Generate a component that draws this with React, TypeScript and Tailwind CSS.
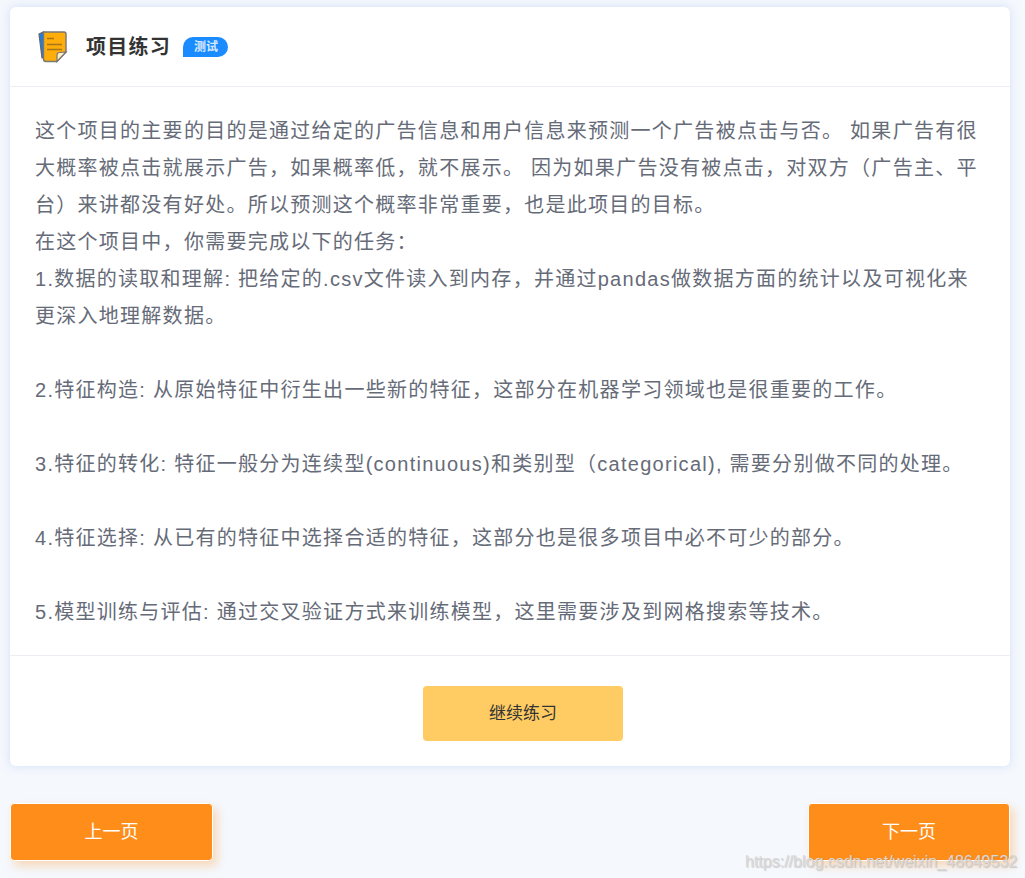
const paragraphs = [
  "这个项目的主要的目的是通过给定的广告信息和用户信息来预测一个广告被点击与否。 如果广告有很大概率被点击就展示广告，如果概率低，就不展示。 因为如果广告没有被点击，对双方（广告主、平台）来讲都没有好处。所以预测这个概率非常重要，也是此项目的目标。",
  "在这个项目中，你需要完成以下的任务：",
  "1.数据的读取和理解: 把给定的.csv文件读入到内存，并通过pandas做数据方面的统计以及可视化来更深入地理解数据。",
  "",
  "2.特征构造: 从原始特征中衍生出一些新的特征，这部分在机器学习领域也是很重要的工作。",
  "",
  "3.特征的转化: 特征一般分为连续型(continuous)和类别型（categorical), 需要分别做不同的处理。",
  "",
  "4.特征选择: 从已有的特征中选择合适的特征，这部分也是很多项目中必不可少的部分。",
  "",
  "5.模型训练与评估: 通过交叉验证方式来训练模型，这里需要涉及到网格搜索等技术。",
];

function NoteIcon() {
  return (
    <svg width="32" height="32" viewBox="0 0 32 32">
      <path d="M3 3 L7.5 1 L9 27 L6 27 Z" fill="#1e7fe0" stroke="#666" strokeWidth="1.2" />
      <path d="M7.5 1 H28 Q30 1 30 3 V21 L21 30.5 H10 Q7.5 30.5 7.5 28 Z" fill="#ffad0a" stroke="#777" strokeWidth="1.4" />
      <path d="M30 21 L21 30.5 V24 Q21 21.5 23.5 21.5 Z" fill="#ffedc4" stroke="#777" strokeWidth="1.2" />
      <path d="M11 7.5 H18 M11 13.5 H26 M11 18.5 H26" stroke="#a8761a" strokeWidth="1.6" fill="none" />
    </svg>
  );
}

export default function App() {
  return (
    <div className="relative flex h-[878px] flex-col overflow-hidden bg-[#f5f8fd] px-[10px] pt-[7px] font-['Liberation_Sans','Noto_Sans_CJK_SC',sans-serif]">
      <div className="w-[1000px] rounded-[6px] bg-white shadow-[0_0_10px_rgba(180,200,240,0.5)]">
        <div className="flex h-[80px] items-center border-b border-[#ebeef2] pl-[26px]">
          <NoteIcon />
          <span className="ml-[18px] text-[20px] font-bold tracking-[1.27px] text-[#333]">项目练习</span>
          <span className="ml-[12px] flex h-[20px] w-[45px] items-center justify-center rounded-tl-[10px] rounded-r-[10px] rounded-bl-none bg-[#1a8cff] pl-[1px] text-[12px] font-bold text-[#d6e9ff]">
            测试
          </span>
        </div>
        <div className="h-[568px] px-[25px] pt-[26px] text-[20px] leading-[37px] tracking-[1.27px] text-[#666b78]">
          {paragraphs.map((p, i) => (
            <p key={i} className="min-h-[37px]">{p}</p>
          ))}
        </div>
        <div className="flex h-[111px] items-start justify-center border-t border-[#ebeef2] pl-[26px] pt-[30px]">
          <button className="flex h-[55px] w-[200px] items-center justify-center rounded-[4px] bg-[#ffcb63] text-[17px] text-[#333]">
            继续练习
          </button>
        </div>
      </div>
      <div className="mt-[37px] flex w-[1000px] justify-between">
        <button className="flex h-[58px] w-[203px] items-center justify-center rounded-[4px] border border-white bg-[#ff8d1a] pt-[1px] text-[18px] text-white shadow-[4px_5px_10px_rgba(255,141,26,0.3)]">
          上一页
        </button>
        <button className="flex h-[58px] w-[202px] items-center justify-center rounded-[4px] border border-white bg-[#ff8d1a] pt-[1px] text-[18px] text-white shadow-[4px_5px_10px_rgba(255,141,26,0.3)]">
          下一页
        </button>
      </div>
      <span className="absolute left-[745px] top-[850px] text-[16px] text-[#d8d8d8] [text-shadow:1px_1px_1px_rgba(120,120,120,0.35)]">
        https://blog.csdn.net/weixin_48649532
      </span>
    </div>
  );
}
